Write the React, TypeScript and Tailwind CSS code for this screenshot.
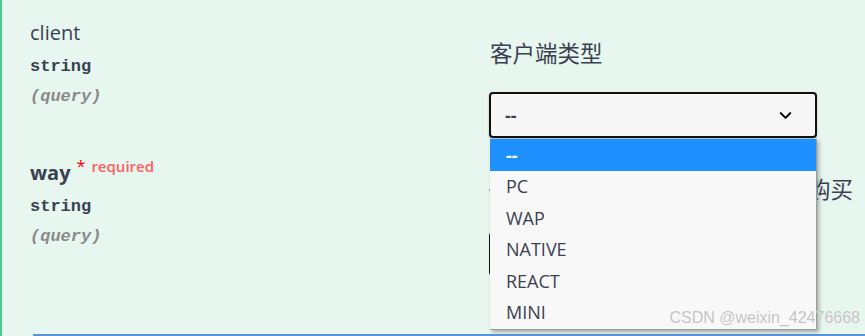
import { ChevronDown } from "lucide-react";

const options = ["--", "PC", "WAP", "NATIVE", "REACT", "MINI"];

function ParamName({ name, required }: { name: string; required?: boolean }) {
  return (
    <div className="h-[26px] flex items-center leading-none">
      <span className={"text-[20px] text-[#3b4151] " + (required ? "font-bold" : "")}>{name}</span>
      {required && (
        <span className="ml-[6px] -mt-[14px] flex items-center">
          <span className="text-[16px] text-[#ff0000]">*</span>
          <span className="ml-[6px] text-[15px] font-semibold text-[#ff6262]">required</span>
        </span>
      )}
    </div>
  );
}

function TypeInfo() {
  return (
    <>
      <div className="mt-[10px] h-[22px] flex items-center text-[17px] font-bold text-[#3b4151]" style={{ fontFamily: '"Liberation Mono", monospace' }}>
        string
      </div>
      <div className="mt-[8px] h-[22px] flex items-center text-[17px] italic font-semibold text-[#8a8a8a]" style={{ fontFamily: '"Liberation Mono", monospace' }}>
        (query)
      </div>
    </>
  );
}

export default function App() {
  return (
    <div
      className="relative h-[336px] w-[865px] overflow-hidden bg-[#e8f6f0] border-l-2 border-[#49cc90] flex flex-col"
      style={{ fontFamily: '"Open Sans", "Noto Sans CJK SC", sans-serif' }}
    >
      {/* row: client */}
      <div className="h-[150px] flex pl-[28px]">
        <div className="w-[459px] shrink-0 pt-[20px]">
          <ParamName name="client" />
          <TypeInfo />
        </div>
        <div className="pt-[40px]">
          <div className="ml-[1px] h-[28px] flex items-center text-[22.5px] text-[#3b4151]">客户端类型</div>
          <div className="relative mt-[24px]">
            <div className="w-[328px] h-[46px] rounded-[4px] border-2 border-[#111] bg-[#f7f7f7] shadow-[0_1px_2px_rgba(0,0,0,0.25)] flex items-center justify-between pl-[14px] pr-[20px]">
              <span className="text-[18px] font-bold text-[#3b4151]">--</span>
              <ChevronDown size={19} strokeWidth={2.6} className="text-black" />
            </div>
            <div className="absolute left-[1px] top-[47px] z-10 w-[327px] bg-[#f8f8f8] border-r border-b border-[#9a9a9a] shadow-[2px_2px_4px_rgba(0,0,0,0.3)]">
              {options.map((o, i) => (
                <div
                  key={o}
                  className={
                    "flex items-center pl-[16px] text-[18px] " +
                    (i === 0 ? "h-[32px] bg-[#1e90ff] text-white font-bold" : "h-[31.5px] text-[#3b4151]")
                  }
                >
                  {o}
                </div>
              ))}
            </div>
          </div>
        </div>
      </div>

      {/* row: way */}
      <div className="h-[140px] flex pl-[28px]">
        <div className="w-[459px] shrink-0 pt-[10px]">
          <ParamName name="way" required />
          <TypeInfo />
        </div>
        <div className="pt-[26px]">
          <div className="w-[364px] h-[28px] flex items-center justify-between text-[22.5px] text-[#3b4151]">
            <span className="w-[2px] h-[2px] rounded-full bg-[#d2691e]" />
            <span>购买</span>
          </div>
          <div className="mt-[28px] w-[328px] h-[44px] rounded-[4px] border-2 border-[#111] bg-[#f7f7f7]" />
        </div>
      </div>

      <div className="flex-1" />
      <div className="ml-[31px] h-[2px] bg-[#5a94d6]" />

      <div
        className="absolute right-[5px] bottom-[6px] z-20 text-[16px] text-[#c4c4c4] [text-shadow:0_0_1px_#ffffff]"
        style={{ fontFamily: '"Liberation Sans", sans-serif' }}
      >
        CSDN @weixin_42476668
      </div>
    </div>
  );
}
